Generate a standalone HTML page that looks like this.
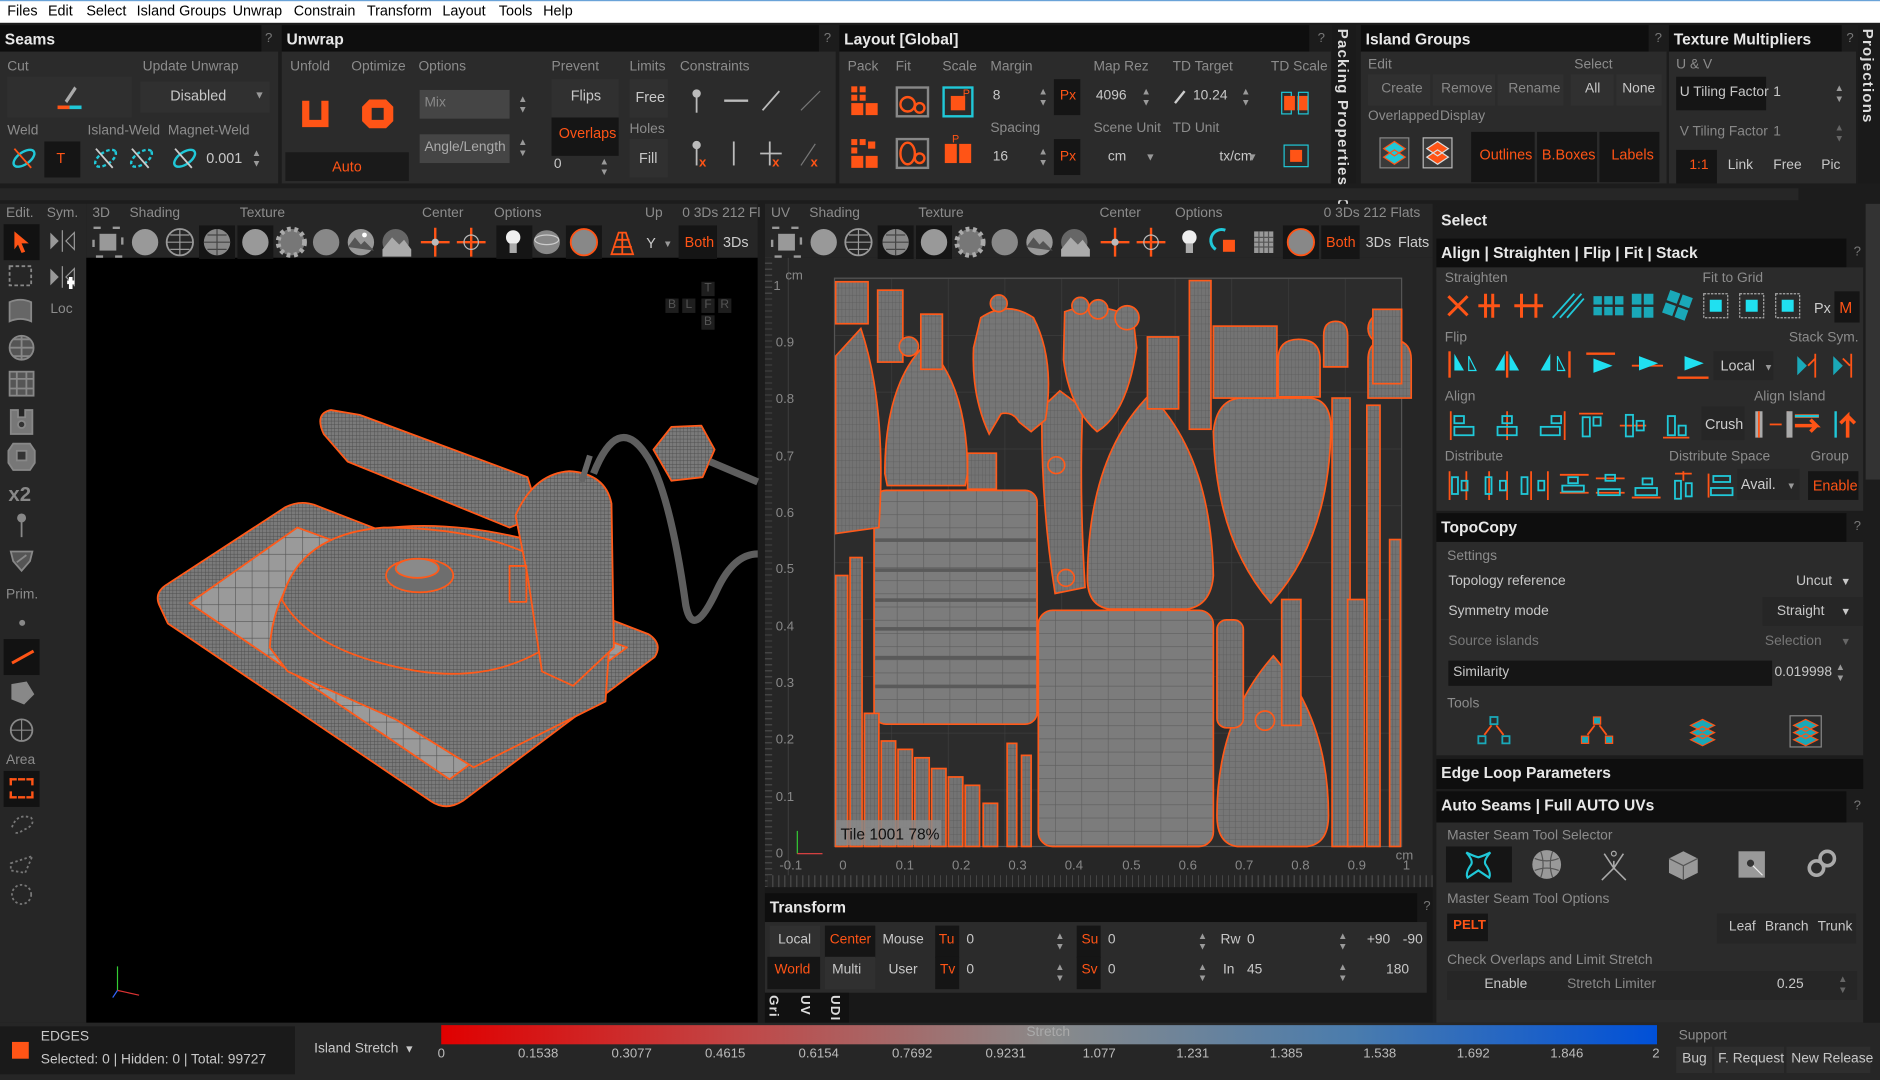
<!DOCTYPE html>
<html><head><meta charset="utf-8">
<style>
*{margin:0;padding:0;box-sizing:border-box}
html,body{width:1880px;height:1080px;overflow:hidden;background:#1c1c1c}
#r{position:absolute;left:0;top:0;width:1568px;height:901px;transform:scale(1.19898);transform-origin:0 0;font-family:"Liberation Sans Narrow","Liberation Sans",sans-serif;font-size:11.5px;color:#c8c8c8;background:#1c1c1c;overflow:hidden}
.a{position:absolute}
.l{position:absolute;color:#8c8c8c;font-size:11.5px;white-space:nowrap}
.t{position:absolute;color:#c8c8c8;white-space:nowrap}
.o{color:#ff5416!important}
.hd{position:absolute;background:#0e0e0e;color:#e8e8e8;font-family:"Liberation Sans",sans-serif;font-weight:bold;font-size:13px;padding:4px 4px;white-space:nowrap}
.pn{position:absolute;background:#2b2b2b}
.bx{position:absolute;background:#333}
.bk{position:absolute;background:#151515}
.c{text-align:center}
.q{position:absolute;color:#777;font-size:11px}
.sp{position:absolute;color:#9a9a9a;font-size:8px;line-height:9px}
.ci{position:absolute;border-radius:50%;background:#9a9a9a}
.vt{position:absolute;writing-mode:vertical-rl;color:#ddd;font-weight:bold;font-family:"Liberation Sans",sans-serif;font-size:12.5px;letter-spacing:1px}
svg{position:absolute;overflow:visible}
</style></head><body><div id="r">

<!-- menu -->
<div class="a" style="left:0;top:0;width:1568px;height:19px;background:#fff;border-top:1px solid #6aa3d8"></div>
<div class="a" style="left:0;top:2px;width:600px;height:16px;white-space:nowrap;font-family:'Liberation Sans Narrow','Liberation Sans',sans-serif;font-size:12px;color:#000">
<span class="a" style="left:6px">Files</span><span class="a" style="left:40px">Edit</span><span class="a" style="left:72px">Select</span><span class="a" style="left:114px">Island Groups</span><span class="a" style="left:194px">Unwrap</span><span class="a" style="left:245px">Constrain</span><span class="a" style="left:306px">Transform</span><span class="a" style="left:369px">Layout</span><span class="a" style="left:416px">Tools</span><span class="a" style="left:453px">Help</span></div>

<!-- ===== SEAMS ===== -->
<div class="pn" style="left:0;top:43px;width:232px;height:110px"></div>
<div class="hd" style="left:0;top:21px;width:218px;height:22px">Seams</div><div class="q" style="left:221px;top:26px">?</div>
<div class="l" style="left:6px;top:50px">Cut</div><div class="l" style="left:119px;top:50px">Update Unwrap</div>
<div class="bx" style="left:6px;top:64px;width:104px;height:34px;background:#2f2f2f"></div>
<svg style="left:48px;top:70px" width="24" height="24"><path d="M14 2 L16 4 L8 16 L6 14Z" fill="#aaa"/><rect x="0" y="18" width="10" height="3" fill="#ff5416"/><rect x="10" y="18" width="10" height="3" fill="#20c8d8"/></svg>
<div class="bx" style="left:117px;top:68px;width:108px;height:26px;background:#303030"></div>
<div class="t" style="left:142px;top:73px;font-size:12px">Disabled</div><div class="t" style="left:212px;top:74px;font-size:9px;color:#999">▼</div>
<div class="l" style="left:6px;top:103px">Weld</div><div class="l" style="left:73px;top:103px">Island-Weld</div><div class="l" style="left:140px;top:103px">Magnet-Weld</div>
<svg style="left:8px;top:122px" width="24" height="20"><ellipse cx="12" cy="10" rx="10" ry="5" fill="none" stroke="#20c8d8" stroke-width="2" transform="rotate(-35 12 10)"/><line x1="4" y1="2" x2="18" y2="18" stroke="#ff5416" stroke-width="1.5"/></svg>
<div class="bk" style="left:37px;top:118px;width:30px;height:30px"></div><div class="t o" style="left:47px;top:125px;font-size:12px">T</div>
<svg style="left:76px;top:122px" width="24" height="20"><ellipse cx="12" cy="10" rx="10" ry="5" fill="none" stroke="#20c8d8" stroke-width="2" stroke-dasharray="3 2" transform="rotate(-35 12 10)"/><line x1="4" y1="2" x2="18" y2="18" stroke="#ccc" stroke-width="1.5"/></svg>
<svg style="left:106px;top:122px" width="24" height="20"><ellipse cx="12" cy="10" rx="10" ry="5" fill="none" stroke="#20c8d8" stroke-width="2" stroke-dasharray="3 2" transform="rotate(-35 12 10)"/><line x1="4" y1="2" x2="18" y2="18" stroke="#ccc" stroke-width="1.5"/></svg>
<svg style="left:142px;top:122px" width="24" height="20"><ellipse cx="12" cy="10" rx="10" ry="5" fill="none" stroke="#20c8d8" stroke-width="2" transform="rotate(-35 12 10)"/><line x1="4" y1="2" x2="18" y2="18" stroke="#ccc" stroke-width="1.5"/></svg>
<div class="t" style="left:172px;top:125px;font-size:12px">0.001</div><div class="sp" style="left:210px;top:123px">▲<br>▼</div>

<!-- ===== UNWRAP ===== -->
<div class="pn" style="left:235px;top:43px;width:462px;height:110px"></div>
<div class="hd" style="left:235px;top:21px;width:448px;height:22px">Unwrap</div><div class="q" style="left:687px;top:26px">?</div>
<div class="l" style="left:242px;top:50px">Unfold</div><div class="l" style="left:293px;top:50px">Optimize</div><div class="l" style="left:349px;top:50px">Options</div><div class="l" style="left:460px;top:50px">Prevent</div><div class="l" style="left:525px;top:50px">Limits</div><div class="l" style="left:567px;top:50px">Constraints</div>
<svg style="left:250px;top:82px" width="28" height="26"><path d="M2 2 H8 V18 H18 V2 H24 V24 H2Z" fill="#ff5416"/></svg>
<svg style="left:302px;top:82px" width="28" height="26"><path d="M6 1 H20 L26 7 V19 L20 25 H6 L0 19 V7Z M8 8 V18 H18 V8Z" fill="#ff5416" fill-rule="evenodd"/></svg>
<div class="bk" style="left:238px;top:127px;width:103px;height:24px;background:#1a1a1a"></div><div class="t o" style="left:277px;top:132px;font-size:12px">Auto</div>
<div class="bx" style="left:350px;top:75px;width:75px;height:24px;background:#454545"></div><div class="t" style="left:354px;top:80px;color:#888">Mix</div><div class="sp" style="left:432px;top:78px">▲<br>▼</div>
<div class="bx" style="left:350px;top:112px;width:75px;height:24px;background:#454545"></div><div class="t" style="left:354px;top:117px;color:#aaa">Angle/Length</div><div class="sp" style="left:432px;top:114px">▲<br>▼</div>
<div class="bx" style="left:460px;top:66px;width:56px;height:32px;background:#303030"></div><div class="t" style="left:476px;top:73px;font-size:12px">Flips</div>
<div class="bk" style="left:460px;top:98px;width:56px;height:32px"></div><div class="t o" style="left:466px;top:104px;font-size:12px">Overlaps</div>
<div class="t" style="left:462px;top:131px">0</div><div class="sp" style="left:500px;top:130px">▲<br>▼</div>
<div class="bx" style="left:525px;top:66px;width:32px;height:32px;background:#303030"></div><div class="t" style="left:530px;top:74px;font-size:12px">Free</div>
<div class="l" style="left:525px;top:102px">Holes</div>
<div class="bx" style="left:525px;top:116px;width:32px;height:32px;background:#303030"></div><div class="t" style="left:533px;top:125px;font-size:12px">Fill</div>
<svg style="left:572px;top:72px" width="120" height="70" stroke="#bbb" fill="#bbb">
<circle cx="9" cy="6" r="3"/><line x1="9" y1="8" x2="9" y2="22" stroke-width="1.5"/>
<line x1="32" y1="12" x2="52" y2="12" stroke-width="2"/>
<line x1="64" y1="20" x2="78" y2="4" stroke-width="1.5"/>
<line x1="96" y1="20" x2="112" y2="4" stroke-width="1" stroke="#777"/>
<circle cx="9" cy="49" r="3"/><line x1="9" y1="51" x2="9" y2="66" stroke-width="1.5"/><text x="11" y="67" fill="#ff5416" stroke="none" font-size="11" font-weight="bold" font-family="Liberation Sans">x</text>
<line x1="40" y1="46" x2="40" y2="66" stroke-width="1.5"/>
<line x1="62" y1="56" x2="80" y2="56" stroke-width="1.5"/><line x1="70" y1="46" x2="70" y2="66" stroke-width="1.5"/><text x="72" y="67" fill="#ff5416" stroke="none" font-size="11" font-weight="bold" font-family="Liberation Sans">x</text>
<line x1="96" y1="66" x2="108" y2="48" stroke-width="1" stroke="#777"/><text x="104" y="67" fill="#ff5416" stroke="none" font-size="11" font-weight="bold" font-family="Liberation Sans">x</text>
</svg>

<!-- ===== LAYOUT ===== -->
<div class="pn" style="left:700px;top:43px;width:410px;height:110px"></div>
<div class="hd" style="left:700px;top:21px;width:392px;height:22px">Layout [Global]</div><div class="q" style="left:1099px;top:26px">?</div>
<div class="l" style="left:707px;top:50px">Pack</div><div class="l" style="left:747px;top:50px">Fit</div><div class="l" style="left:786px;top:50px">Scale</div><div class="l" style="left:826px;top:50px">Margin</div><div class="l" style="left:912px;top:50px">Map Rez</div><div class="l" style="left:978px;top:50px">TD Target</div><div class="l" style="left:1060px;top:50px">TD Scale</div>
<svg style="left:708px;top:72px" width="26" height="72" fill="#ff5416"><rect x="2" y="0" width="5" height="5"/><rect x="9" y="0" width="5" height="5"/><rect x="2" y="7" width="5" height="5"/><rect x="9" y="7" width="5" height="5"/><rect x="2" y="14" width="10" height="10"/><rect x="14" y="14" width="10" height="10"/><rect x="2" y="44" width="5" height="5"/><rect x="9" y="44" width="5" height="5"/><rect x="2" y="51" width="5" height="5"/><rect x="16" y="46" width="6" height="6"/><rect x="2" y="58" width="10" height="10"/><rect x="14" y="58" width="10" height="10"/></svg>
<svg style="left:747px;top:72px" width="28" height="72" fill="none" stroke="#ff5416" stroke-width="2"><rect x="1" y="1" width="26" height="24" stroke="#888"/><circle cx="10" cy="15" r="6"/><circle cx="20" cy="18" r="4"/><rect x="1" y="44" width="26" height="24" stroke="#888"/><ellipse cx="10" cy="56" rx="6" ry="9"/><circle cx="20" cy="60" r="4"/></svg>
<svg style="left:786px;top:72px" width="28" height="72"><rect x="1" y="1" width="24" height="24" fill="none" stroke="#20c8d8" stroke-width="2"/><rect x="7" y="8" width="12" height="12" fill="#ff5416"/><text x="17" y="9" fill="#ff5416" font-size="9" font-family="Liberation Sans">P</text><rect x="2" y="48" width="10" height="16" fill="#ff5416"/><rect x="14" y="48" width="10" height="16" fill="#ff5416"/><text x="8" y="47" fill="#ff5416" font-size="9" font-family="Liberation Sans">P</text></svg>
<div class="t" style="left:828px;top:74px">8</div><div class="sp" style="left:866px;top:72px">▲<br>▼</div><div class="bk" style="left:879px;top:66px;width:22px;height:30px"></div><div class="t o" style="left:884px;top:74px">Px</div>
<div class="l" style="left:826px;top:101px">Spacing</div>
<div class="t" style="left:828px;top:125px">16</div><div class="sp" style="left:866px;top:122px">▲<br>▼</div><div class="bk" style="left:879px;top:116px;width:22px;height:30px"></div><div class="t o" style="left:884px;top:125px">Px</div>
<div class="t" style="left:914px;top:74px">4096</div><div class="sp" style="left:952px;top:72px">▲<br>▼</div>
<div class="l" style="left:912px;top:101px">Scene Unit</div>
<div class="t" style="left:924px;top:125px">cm</div><div class="t" style="left:955px;top:126px;font-size:9px;color:#999">▼</div>
<svg style="left:978px;top:74px" width="12" height="14"><line x1="2" y1="12" x2="10" y2="2" stroke="#ccc" stroke-width="2"/></svg><div class="t" style="left:995px;top:74px">10.24</div><div class="sp" style="left:1035px;top:72px">▲<br>▼</div>
<div class="l" style="left:978px;top:101px">TD Unit</div>
<div class="t" style="left:1017px;top:125px">tx/cm</div><div class="t" style="left:1040px;top:126px;font-size:9px;color:#999">▼</div>
<svg style="left:1068px;top:77px" width="26" height="70"><rect x="1" y="0" width="8" height="18" fill="none" stroke="#20c8d8"/><rect x="3" y="3" width="9" height="12" fill="#ff5416"/><rect x="14" y="3" width="9" height="12" fill="#ff5416"/><rect x="15" y="0" width="8" height="18" fill="none" stroke="#20c8d8"/><rect x="3" y="44" width="20" height="18" fill="none" stroke="#20c8d8"/><rect x="8" y="48" width="10" height="10" fill="#ff5416"/></svg>

<!-- Packing properties vertical -->
<div class="a" style="left:1111px;top:21px;width:20px;height:132px;background:#1a1a1a"></div>
<div class="vt" style="left:1113px;top:24px">Packing Properties [C</div>

<!-- ===== ISLAND GROUPS ===== -->
<div class="pn" style="left:1135px;top:43px;width:255px;height:110px"></div>
<div class="hd" style="left:1135px;top:21px;width:240px;height:22px">Island Groups</div><div class="q" style="left:1380px;top:26px">?</div>
<div class="l" style="left:1141px;top:48px">Edit</div><div class="l" style="left:1313px;top:48px">Select</div>
<div class="bx" style="left:1141px;top:62px;width:52px;height:26px;background:#303030"></div><div class="t" style="left:1152px;top:68px;color:#888">Create</div>
<div class="bx" style="left:1195px;top:62px;width:52px;height:26px;background:#303030"></div><div class="t" style="left:1202px;top:68px;color:#888">Remove</div>
<div class="bx" style="left:1249px;top:62px;width:55px;height:26px;background:#303030"></div><div class="t" style="left:1258px;top:68px;color:#888">Rename</div>
<div class="bx" style="left:1310px;top:62px;width:36px;height:26px;background:#303030"></div><div class="t" style="left:1322px;top:68px">All</div>
<div class="bx" style="left:1348px;top:62px;width:38px;height:26px;background:#303030"></div><div class="t" style="left:1353px;top:68px">None</div>
<div class="l" style="left:1141px;top:91px">Overlapped</div><div class="l" style="left:1201px;top:91px">Display</div>
<svg style="left:1150px;top:114px" width="70" height="28"><rect x="1" y="1" width="24" height="25" fill="#3a3a3a" stroke="#888"/><path d="M13 4 L22 10 L13 16 L4 10Z M13 11 L22 17 L13 23 L4 17Z" fill="#20c8d8" stroke="#ff5416"/><rect x="37" y="1" width="24" height="25" fill="#3a3a3a" stroke="#bbb"/><path d="M49 4 L58 10 L49 16 L40 10Z M49 11 L58 17 L49 23 L40 17Z" fill="#ff5416" stroke="#ddd"/></svg>
<div class="bk" style="left:1227px;top:110px;width:53px;height:42px"></div><div class="t o" style="left:1234px;top:122px;font-size:12px">Outlines</div>
<div class="bk" style="left:1282px;top:110px;width:50px;height:42px"></div><div class="t o" style="left:1286px;top:122px;font-size:12px">B.Boxes</div>
<div class="bk" style="left:1334px;top:110px;width:50px;height:42px"></div><div class="t o" style="left:1344px;top:122px;font-size:12px">Labels</div>

<!-- ===== TEXTURE MULTIPLIERS ===== -->
<div class="pn" style="left:1392px;top:43px;width:156px;height:110px"></div>
<div class="hd" style="left:1392px;top:21px;width:144px;height:22px">Texture Multipliers</div><div class="q" style="left:1540px;top:26px">?</div>
<div class="l" style="left:1398px;top:48px">U &amp; V</div>
<div class="bk" style="left:1398px;top:64px;width:75px;height:28px"></div><div class="t" style="left:1401px;top:71px">U Tiling Factor</div><div class="t" style="left:1479px;top:71px">1</div><div class="sp" style="left:1530px;top:69px">▲<br>▼</div>
<div class="t" style="left:1401px;top:104px;color:#888">V Tiling Factor</div><div class="t" style="left:1479px;top:104px;color:#888">1</div><div class="sp" style="left:1530px;top:102px;color:#666">▲<br>▼</div>
<div class="bk" style="left:1398px;top:125px;width:34px;height:28px"></div><div class="t o" style="left:1409px;top:132px">1:1</div>
<div class="t" style="left:1441px;top:132px">Link</div><div class="t" style="left:1479px;top:132px">Free</div><div class="t" style="left:1519px;top:132px">Pic</div>
<div class="a" style="left:1550px;top:21px;width:18px;height:132px;background:#1a1a1a"></div>
<div class="vt" style="left:1551px;top:24px">Projections</div>

<!-- gap strip -->
<div class="a" style="left:0;top:157px;width:1500px;height:10px;background:#262626"></div>

<!-- ===== 3D VIEWPORT ===== -->
<div class="a" style="left:0;top:170px;width:72px;height:683px;background:#262626"></div>
<div class="a" style="left:72px;top:170px;width:560px;height:45px;background:#262626"></div>
<div class="a" style="left:72px;top:215px;width:560px;height:638px;background:#000"></div>
<div class="a" style="left:632px;top:170px;width:6px;height:683px;background:#1c1c1c"></div>
<div class="l" style="left:5px;top:172px">Edit.</div><div class="l" style="left:39px;top:172px">Sym.</div>
<div class="bk" style="left:3px;top:187px;width:30px;height:30px;background:#121212"></div>
<svg style="left:10px;top:192px" width="16" height="20"><path d="M2 1 L14 11 L8 11 L11 18 L8 19 L5 12 L2 16Z" fill="#ff5416"/></svg>
<svg style="left:40px;top:192px" width="24" height="18"><path d="M2 2 L9 9 L2 16Z" fill="#999"/><line x1="12" y1="0" x2="12" y2="18" stroke="#999"/><path d="M22 2 L15 9 L22 16Z" fill="none" stroke="#999"/></svg>
<svg style="left:40px;top:222px" width="24" height="22"><path d="M2 2 L9 9 L2 16Z" fill="#999"/><line x1="12" y1="0" x2="12" y2="18" stroke="#999"/><path d="M22 2 L15 9 L22 16Z" fill="none" stroke="#999"/><path d="M16 12 h6 v3 h-6Z M17.5 9 h3 v10 h-3Z" fill="#fff"/></svg>
<div class="l" style="left:42px;top:252px">Loc</div>
<svg style="left:6px;top:220px" width="26" height="540" fill="none" stroke="#888" stroke-width="1.5">
<rect x="2" y="2" width="18" height="16" stroke-dasharray="3 2"/>
<path d="M2 32 q9 -4 18 0 v16 q-9 -4 -18 0Z" fill="#666"/>
<circle cx="12" cy="70" r="10" fill="#555"/><path d="M2 70 h20 M12 60 v20 M5 63 h14 M5 77 h14"/>
<rect x="2" y="90" width="20" height="20" fill="#555"/><path d="M2 96 h20 M2 104 h20 M8 90 v20 M16 90 v20"/>
<path d="M3 122 h6 v6 h6 v-6 h6 v20 h-18Z" fill="#777"/><circle cx="12" cy="134" r="3" fill="#333"/>
<path d="M5 150 h14 l4 6 v10 l-4 6 h-14 l-4 -6 v-10Z" fill="#777"/><rect x="8" y="156" width="8" height="8" fill="#333"/>
<text x="1" y="198" fill="#888" stroke="none" font-size="17" font-weight="bold" font-family="Liberation Sans">x2</text>
<circle cx="12" cy="212" r="3" fill="#888"/><line x1="12" y1="214" x2="12" y2="228"/>
<path d="M3 240 h18 l-2 8 l-7 8 l-7 -8Z" fill="#555"/><path d="M8 249 l8 -6"/>
</svg>
<div class="l" style="left:5px;top:490px">Prim.</div>
<div class="ci" style="left:16px;top:517px;width:5px;height:5px;background:#888"></div>
<div class="bk" style="left:3px;top:533px;width:30px;height:30px;background:#121212"></div>
<svg style="left:8px;top:540px" width="22" height="16"><line x1="2" y1="13" x2="20" y2="3" stroke="#ff5416" stroke-width="2.5"/></svg>
<svg style="left:6px;top:565px" width="26" height="60" fill="#888" stroke="#888"><path d="M4 6 l12 -2 l6 10 l-8 8 l-10 -4Z"/><circle cx="12" cy="44" r="9" fill="none" stroke-width="1.5"/><path d="M3 44 h18 M12 35 v18" fill="none"/></svg>
<div class="l" style="left:5px;top:628px">Area</div>
<div class="bk" style="left:3px;top:643px;width:30px;height:30px;background:#121212"></div>
<div class="a" style="left:8px;top:649px;width:20px;height:17px;border:2px dashed #ff5416"></div>
<svg style="left:6px;top:676px" width="26" height="80" fill="none" stroke="#777" stroke-width="1.5" stroke-dasharray="2 2"><path d="M4 14 q4 -12 16 -8 q4 6 -6 10 q-6 4 -8 2"/><path d="M3 44 l18 -6 l-6 14 l-12 -2Z"/><circle cx="12" cy="70" r="8"/></svg>
<!-- 3D toolbar -->
<div class="l" style="left:77px;top:172px">3D</div><div class="l" style="left:108px;top:172px">Shading</div><div class="l" style="left:200px;top:172px">Texture</div><div class="l" style="left:352px;top:172px">Center</div><div class="l" style="left:412px;top:172px">Options</div><div class="l" style="left:538px;top:172px">Up</div><div class="l" style="left:569px;top:172px">0 3Ds 212 Fl</div>
<svg style="left:76px;top:188px" width="560" height="28">
<rect x="2" y="2" width="24" height="24" fill="none" stroke="#999" stroke-dasharray="6 10" stroke-width="2"/><rect x="7" y="7" width="14" height="14" fill="#999"/>
<circle cx="45" cy="14" r="11" fill="#999"/>
<circle cx="74" cy="14" r="11" fill="none" stroke="#999" stroke-width="1.5"/><path d="M63 14 h22 M74 3 v22 M66 8 h16 M66 20 h16" stroke="#999" fill="none"/>
<rect x="90" y="0" width="30" height="28" fill="#151515"/><circle cx="105" cy="14" r="11" fill="#888"/><path d="M94 14 h22 M105 3 v22 M97 8 h16 M97 20 h16" stroke="#444" fill="none"/>
<rect x="122" y="0" width="30" height="28" fill="#151515"/><circle cx="137" cy="14" r="11" fill="#999"/>
<circle cx="167" cy="14" r="11" fill="#777"/><circle cx="167" cy="14" r="11" fill="none" stroke="#aaa" stroke-width="4" stroke-dasharray="3 3"/>
<circle cx="196" cy="14" r="11" fill="#888"/>
<circle cx="225" cy="14" r="11" fill="#999"/><path d="M214 18 l6 -8 l5 6 l3 -3 l8 8" fill="#555"/><circle cx="228" cy="8" r="2" fill="#fff"/>
<circle cx="254" cy="14" r="11" fill="#666"/><path d="M243 20 l8 -10 l6 6 l4 -4 l6 8 v6 h-24Z" fill="#aaa"/>
<path d="M275 14 h24 M287 2 v24" stroke="#ff5416" stroke-width="2"/><circle cx="287" cy="14" r="3" fill="#bbb"/>
<path d="M305 14 h24 M317 2 v24" stroke="#ff5416" stroke-width="2"/><circle cx="317" cy="14" r="6" fill="none" stroke="#bbb"/>
<rect x="338" y="0" width="30" height="28" fill="#151515"/><circle cx="352" cy="10" r="6" fill="#eee"/><rect x="349" y="15" width="6" height="8" fill="#aaa"/>
<ellipse cx="380" cy="14" rx="11" ry="10" fill="#888"/><ellipse cx="380" cy="12" rx="10" ry="4" fill="none" stroke="#ccc"/>
<rect x="396" y="0" width="30" height="28" fill="#151515"/><circle cx="411" cy="14" r="11" fill="#888" stroke="#ff5416" stroke-width="1.5"/>
<path d="M434 24 l6 -18 h6 l6 18Z M436 18 h15 M438 12 h11 M443 6 v18" stroke="#ff5416" fill="none" stroke-width="1.5"/>
<text x="463" y="19" fill="#ccc" font-size="12" font-family="Liberation Sans">Y</text><text x="477" y="18" fill="#999" font-size="8" font-family="Liberation Sans">▼</text>
<rect x="490" y="0" width="32" height="28" fill="#151515"/><text x="495" y="18" fill="#ff5416" font-size="12" font-family="Liberation Sans Narrow,Liberation Sans">Both</text>
<text x="527" y="18" fill="#ccc" font-size="12" font-family="Liberation Sans Narrow,Liberation Sans">3Ds</text>
</svg>
<!-- nav cube -->
<div class="a" style="left:585px;top:235px;font-size:10px;color:#555">
<div class="a" style="left:0px;top:0;width:11px;height:12px;background:#1e1e1e;text-align:center">T</div>
<div class="a" style="left:-30px;top:14px;width:11px;height:12px;background:#1e1e1e;text-align:center">B</div>
<div class="a" style="left:-16px;top:14px;width:11px;height:12px;background:#1e1e1e;text-align:center">L</div>
<div class="a" style="left:0px;top:14px;width:11px;height:12px;background:#1e1e1e;text-align:center">F</div>
<div class="a" style="left:14px;top:14px;width:11px;height:12px;background:#1e1e1e;text-align:center">R</div>
<div class="a" style="left:0px;top:28px;width:11px;height:12px;background:#1e1e1e;text-align:center">B</div></div>
<svg style="left:92px;top:800px" width="30" height="36"><line x1="6" y1="26" x2="6" y2="6" stroke="#3c3"/><line x1="6" y1="26" x2="24" y2="30" stroke="#d33"/><line x1="6" y1="26" x2="2" y2="32" stroke="#36f"/></svg>

<!-- IRON -->
<svg style="left:0;top:0" width="640" height="853">
<defs>
<pattern id="mesh" width="3" height="3" patternUnits="userSpaceOnUse"><rect width="3" height="3" fill="#7a7a7a"/><path d="M0 0 H3 M0 0 V3" stroke="#4c4c4c" stroke-width="0.7"/></pattern>
<pattern id="mesh2" width="14" height="14" patternUnits="userSpaceOnUse"><rect width="14" height="14" fill="#9a9a9a"/><path d="M0 0 H14 M0 0 V14" stroke="#555" stroke-width="1"/></pattern>
</defs>
<g stroke="#ff5a1a" stroke-width="1.5" stroke-linejoin="round">
<path d="M133 505 Q128 494 140 487 L238 423 Q250 417 262 421 L541 529 Q553 537 546 548 L386 668 Q372 677 359 668 L140 520 Z" fill="url(#mesh)"/>
<path d="M158 503 L248 440 L523 540 L375 650 Z" fill="url(#mesh2)"/>
<path d="M225 540 Q230 470 295 445 Q360 430 440 450 L470 470 L508 540 L505 585 L395 640 L330 600 L240 560 Z" fill="url(#mesh)"/>
<path d="M235 500 Q250 445 320 440 Q420 440 470 480 L470 530 Q420 570 350 560 Q260 545 235 500 Z" fill="url(#mesh)"/>
<ellipse cx="350" cy="480" rx="28" ry="14" fill="#6e6e6e"/><ellipse cx="348" cy="474" rx="18" ry="8" fill="#8a8a8a"/>
<path d="M270 362 Q262 345 276 342 L300 346 L440 398 L450 430 L425 440 L290 385 Z" fill="url(#mesh)"/>
<path d="M430 430 Q445 395 475 393 Q505 395 510 420 L512 540 L478 572 L452 560 L440 480 Z" fill="url(#mesh)"/>
<rect x="425" y="472" width="14" height="30" fill="none"/>
<path d="M545 375 L560 356 L585 355 L596 375 L586 398 L560 401 Z" fill="url(#mesh)"/>
</g>
<path d="M495 395 Q515 345 538 378 Q558 405 572 505 Q578 535 598 492 Q612 462 632 462" stroke="#5e5e5e" stroke-width="6" fill="none"/>
<path d="M592 385 L632 402" stroke="#5e5e5e" stroke-width="6"/>
<path d="M485 402 L492 380" stroke="#666" stroke-width="5"/>
</svg>

<!-- ===== UV VIEWPORT ===== -->
<div class="a" style="left:638px;top:170px;width:557px;height:45px;background:#262626"></div>
<div class="a" style="left:638px;top:215px;width:557px;height:525px;background:#262626"></div>
<div class="l" style="left:643px;top:172px">UV</div><div class="l" style="left:675px;top:172px">Shading</div><div class="l" style="left:766px;top:172px">Texture</div><div class="l" style="left:917px;top:172px">Center</div><div class="l" style="left:980px;top:172px">Options</div><div class="l" style="left:1104px;top:172px">0 3Ds 212 Flats</div>
<svg style="left:642px;top:188px" width="560" height="28">
<rect x="2" y="2" width="24" height="24" fill="none" stroke="#999" stroke-dasharray="6 10" stroke-width="2"/><rect x="7" y="7" width="14" height="14" fill="#999"/>
<circle cx="45" cy="14" r="11" fill="#999"/>
<circle cx="74" cy="14" r="11" fill="none" stroke="#999" stroke-width="1.5"/><path d="M63 14 h22 M74 3 v22 M66 8 h16 M66 20 h16" stroke="#999" fill="none"/>
<rect x="90" y="0" width="30" height="28" fill="#151515"/><circle cx="105" cy="14" r="11" fill="#888"/><path d="M94 14 h22 M105 3 v22 M97 8 h16 M97 20 h16" stroke="#444" fill="none"/>
<rect x="122" y="0" width="30" height="28" fill="#151515"/><circle cx="137" cy="14" r="11" fill="#999"/>
<circle cx="167" cy="14" r="11" fill="#777"/><circle cx="167" cy="14" r="11" fill="none" stroke="#aaa" stroke-width="4" stroke-dasharray="3 3"/>
<circle cx="196" cy="14" r="11" fill="#888"/>
<circle cx="225" cy="14" r="11" fill="#999"/><path d="M214 18 l6 -8 l5 6 l3 -3 l8 8" fill="#555"/>
<circle cx="254" cy="14" r="11" fill="#666"/><path d="M243 20 l8 -10 l6 6 l4 -4 l6 8 v6 h-24Z" fill="#aaa"/>
<path d="M276 14 h24 M288 2 v24" stroke="#ff5416" stroke-width="2"/><circle cx="288" cy="14" r="3" fill="#bbb"/>
<path d="M306 14 h24 M318 2 v24" stroke="#ff5416" stroke-width="2"/><circle cx="318" cy="14" r="6" fill="none" stroke="#bbb"/>
<circle cx="350" cy="10" r="6" fill="#eee"/><rect x="347" y="15" width="6" height="8" fill="#aaa"/>
<path d="M372 20 a9 9 0 0 1 8 -16" stroke="#20c8d8" stroke-width="2.5" fill="none"/><rect x="378" y="12" width="10" height="10" fill="#ff5416"/>
<rect x="404" y="5" width="16" height="18" fill="#999"/><path d="M404 10 h16 M404 14 h16 M404 18 h16 M408 5 v18 M412 5 v18 M416 5 v18" stroke="#555"/>
<rect x="428" y="0" width="30" height="28" fill="#151515"/><circle cx="443" cy="14" r="11" fill="#888" stroke="#ff5416" stroke-width="1.5"/>
<rect x="460" y="0" width="32" height="28" fill="#151515"/><text x="464" y="18" fill="#ff5416" font-size="12" font-family="Liberation Sans Narrow,Liberation Sans">Both</text>
<text x="497" y="18" fill="#ccc" font-size="12" font-family="Liberation Sans Narrow,Liberation Sans">3Ds</text>
<text x="524" y="18" fill="#ccc" font-size="12" font-family="Liberation Sans Narrow,Liberation Sans">Flats</text>
</svg>
<div class="a" style="left:638px;top:215px;width:20px;height:525px;border-right:1px solid #3a3a3a;background:repeating-linear-gradient(to bottom,#262626 0 4px,#444 4px 5px);background-size:6px 100%;background-repeat:no-repeat"></div>
<div class="a" style="left:640px;top:730px;width:555px;height:10px;background:repeating-linear-gradient(to right,#262626 0 4px,#444 4px 5px)"></div>
<div class="a" style="left:645px;top:216px;font-size:11px;color:#888;line-height:47.3px">
<div class="a" style="top:0">1</div><div class="a" style="left:10px;top:7px;line-height:14px">cm</div>
</div>
<div class="a" style="left:647px;top:263px;font-size:11px;color:#888;line-height:47.35px">0.9<br>0.8<br>0.7<br>0.6<br>0.5<br>0.4<br>0.3<br>0.2<br>0.1<br>0</div>
<div class="a" style="left:650px;top:716px;width:540px;font-size:11px;color:#888">
<span class="a" style="left:0">-0.1</span><span class="a" style="left:50px">0</span><span class="a" style="left:97px">0.1</span><span class="a" style="left:144px">0.2</span><span class="a" style="left:191px">0.3</span><span class="a" style="left:238px">0.4</span><span class="a" style="left:286px">0.5</span><span class="a" style="left:333px">0.6</span><span class="a" style="left:380px">0.7</span><span class="a" style="left:427px">0.8</span><span class="a" style="left:474px">0.9</span><span class="a" style="left:520px">1</span><span class="a" style="left:514px;top:-8px">cm</span></div>
<svg style="left:0;top:0" width="1200" height="740">
<defs>
<pattern id="uvg" width="47.3" height="47.4" x="696" y="232" patternUnits="userSpaceOnUse"><rect width="47.3" height="47.4" fill="#2c2c2c"/><path d="M0 0 H47.3 M0 0 V47.4" stroke="#3f3f3f"/></pattern>
<pattern id="um" width="5" height="5" patternUnits="userSpaceOnUse"><rect width="5" height="5" fill="#767676"/><path d="M0 0 H5 M0 0 V5" stroke="#5d5d5d" stroke-width="0.7"/></pattern>
<pattern id="ub" width="22" height="11" patternUnits="userSpaceOnUse"><rect width="22" height="11" fill="#7c7c7c"/><path d="M0 0 H22 M0 0 V11" stroke="#5d5d5d" stroke-width="1"/></pattern>
<pattern id="us" width="3" height="6" patternUnits="userSpaceOnUse"><rect width="3" height="6" fill="#737373"/><path d="M0 0 V6 M0 0 H3" stroke="#5a5a5a" stroke-width="0.6"/></pattern>
</defs>
<rect x="696" y="232" width="473" height="474" fill="url(#uvg)" stroke="#555"/>
<g stroke="#ff5a1a" stroke-width="1.4">
<rect x="729" y="409" width="136" height="195" rx="10" fill="url(#ub)"/>
<g stroke="none" fill="#5a5a5a"><rect x="730" y="449" width="134" height="3"/><rect x="730" y="474" width="134" height="3"/><rect x="730" y="499" width="134" height="3"/><rect x="730" y="523" width="134" height="3"/><rect x="730" y="547" width="134" height="3"/><rect x="730" y="571" width="134" height="3"/></g>
<rect x="866" y="509" width="146" height="197" rx="12" fill="url(#ub)"/>
<path d="M959 329 Q1010 380 1012 480 Q1010 505 990 508 H925 Q906 505 907 480 Q908 380 959 329Z" fill="url(#um)"/>
<path d="M1012 360 Q1015 333 1035 332 H1092 Q1111 333 1110 360 Q1108 450 1060 503 Q1014 450 1012 360Z" fill="url(#um)"/>
<path d="M1062 547 Q1108 600 1108 680 Q1108 704 1090 706 H1032 Q1015 704 1015 680 Q1015 600 1062 547Z" fill="url(#um)"/>
<path d="M772 287 Q807 320 807 395 L805 405 H740 L738 395 Q738 320 772 287Z" fill="url(#um)"/>
<path d="M697 297 L718 274 Q740 340 733 440 L697 445Z" fill="url(#us)"/>
<path d="M884 326 L903 340 Q900 410 905 490 L880 495 Q868 420 869 340Z" fill="url(#us)"/>
<path d="M818 265 Q840 250 862 265 Q880 300 872 350 L860 360 L850 352 Q845 343 835 345 L825 362 Q810 330 812 290Z" fill="url(#um)"/>
<path d="M888 260 Q915 250 945 265 L948 290 Q940 345 915 360 Q892 340 887 300Z" fill="url(#um)"/>
<rect x="1111" y="332" width="15" height="374" fill="url(#us)"/>
<rect x="1140" y="338" width="11" height="368" fill="url(#us)"/>
<rect x="1159" y="450" width="9" height="256" fill="url(#us)"/>
<rect x="1012" y="272" width="53" height="60" fill="url(#us)"/>
<path d="M1066 300 Q1066 283 1083 283 Q1101 283 1101 300 V331 H1066Z" fill="url(#us)"/>
<path d="M1141 300 Q1141 283 1159 283 Q1177 283 1177 300 V332 H1141Z" fill="url(#us)"/>
<path d="M1104 280 Q1104 268 1114 268 Q1124 268 1124 280 V306 H1104Z" fill="url(#us)"/>
<rect x="992" y="234" width="18" height="124" fill="url(#us)"/>
<rect x="957" y="281" width="26" height="60" fill="url(#us)"/>
<rect x="697" y="235" width="27" height="35" fill="url(#us)"/>
<rect x="732" y="242" width="21" height="60" fill="url(#us)"/>
<rect x="768" y="262" width="18" height="46" fill="url(#us)"/>
<circle cx="758" cy="289" r="8" fill="url(#um)"/><circle cx="833" cy="253" r="7" fill="url(#um)"/><circle cx="916" cy="258" r="8" fill="url(#um)"/><circle cx="901" cy="255" r="7" fill="url(#um)"/><circle cx="940" cy="265" r="10" fill="url(#um)"/><circle cx="1154" cy="274" r="13" fill="url(#um)"/><circle cx="881" cy="388" r="7" fill="url(#um)"/><circle cx="889" cy="482" r="7" fill="url(#um)"/><circle cx="1055" cy="601" r="8" fill="url(#um)"/>
<rect x="1015" y="517" width="22" height="90" rx="8" fill="url(#us)"/>
<rect x="1069" y="500" width="16" height="105" fill="url(#us)"/>
<rect x="1124" y="500" width="14" height="206" fill="url(#us)"/>
<rect x="807" y="378" width="24" height="30" fill="url(#us)"/>
<rect x="697" y="480" width="10" height="226" fill="url(#us)"/><rect x="709" y="465" width="10" height="241" fill="url(#us)"/><rect x="721" y="595" width="12" height="111" fill="url(#us)"/><rect x="735" y="618" width="12" height="88" fill="url(#us)"/><rect x="749" y="625" width="12" height="81" fill="url(#us)"/><rect x="763" y="632" width="12" height="74" fill="url(#us)"/><rect x="777" y="641" width="12" height="65" fill="url(#us)"/><rect x="791" y="648" width="12" height="58" fill="url(#us)"/><rect x="805" y="655" width="12" height="51" fill="url(#us)"/><rect x="820" y="670" width="12" height="36" fill="url(#us)"/><rect x="840" y="620" width="8" height="86" fill="url(#us)"/><rect x="852" y="630" width="8" height="76" fill="url(#us)"/>
<rect x="1145" y="258" width="24" height="62" fill="url(#us)"/>
</g>
<rect x="697" y="684" width="88" height="21" fill="#8a8a8a" opacity="0.85"/>
<text x="701" y="700" fill="#111" font-size="13" font-family="Liberation Sans">Tile 1001 78%</text>
<line x1="665" y1="712" x2="665" y2="693" stroke="#3c3"/><line x1="665" y1="712" x2="686" y2="712" stroke="#e44"/>
</svg>

<!-- Transform -->
<div class="a" style="left:638px;top:740px;width:557px;height:113px;background:#181818"></div>
<div class="hd" style="left:638px;top:745px;width:544px;height:24px">Transform</div><div class="q" style="left:1187px;top:750px">?</div>
<div class="pn" style="left:638px;top:769px;width:552px;height:59px"></div>
<div class="bx" style="left:642px;top:772px;width:42px;height:27px;background:#303030"></div><div class="t" style="left:649px;top:778px">Local</div>
<div class="bk" style="left:688px;top:772px;width:42px;height:27px"></div><div class="t o" style="left:692px;top:778px">Center</div>
<div class="t" style="left:736px;top:778px">Mouse</div>
<div class="bk" style="left:640px;top:798px;width:44px;height:27px"></div><div class="t o" style="left:646px;top:803px">World</div>
<div class="bx" style="left:688px;top:798px;width:42px;height:27px;background:#303030"></div><div class="t" style="left:694px;top:803px">Multi</div>
<div class="t" style="left:741px;top:803px">User</div>
<div class="bk" style="left:780px;top:772px;width:20px;height:27px"></div><div class="t o" style="left:783px;top:778px">Tu</div><div class="t" style="left:806px;top:778px">0</div><div class="sp" style="left:880px;top:776px">▲<br>▼</div>
<div class="bk" style="left:780px;top:798px;width:20px;height:27px"></div><div class="t o" style="left:784px;top:803px">Tv</div><div class="t" style="left:806px;top:803px">0</div><div class="sp" style="left:880px;top:802px">▲<br>▼</div>
<div class="bk" style="left:898px;top:772px;width:20px;height:27px"></div><div class="t o" style="left:902px;top:778px">Su</div><div class="t" style="left:924px;top:778px">0</div><div class="sp" style="left:999px;top:776px">▲<br>▼</div>
<div class="bk" style="left:898px;top:798px;width:20px;height:27px"></div><div class="t o" style="left:902px;top:803px">Sv</div><div class="t" style="left:924px;top:803px">0</div><div class="sp" style="left:999px;top:802px">▲<br>▼</div>
<div class="t" style="left:1018px;top:778px">Rw</div><div class="t" style="left:1040px;top:778px">0</div><div class="sp" style="left:1116px;top:776px">▲<br>▼</div>
<div class="t" style="left:1020px;top:803px">In</div><div class="t" style="left:1040px;top:803px">45</div><div class="sp" style="left:1116px;top:802px">▲<br>▼</div>
<div class="t" style="left:1140px;top:778px">+90</div><div class="t" style="left:1170px;top:778px">-90</div><div class="t" style="left:1156px;top:803px">180</div>
<div class="a" style="left:638px;top:828px;width:70px;height:25px;background:#111"></div>
<div class="vt" style="left:639px;top:830px;font-size:11px">Gri</div><div class="vt" style="left:665px;top:830px;font-size:11px">UV</div><div class="vt" style="left:690px;top:830px;font-size:11px">UDI</div>

<!-- ===== RIGHT PANEL ===== -->
<div class="a" style="left:1195px;top:170px;width:373px;height:683px;background:#1c1c1c"></div>
<div class="a" style="left:1556px;top:170px;width:12px;height:230px;background:#333"></div>
<div class="hd" style="left:1198px;top:172px;width:356px;height:24px;background:#1c1c1c">Select</div>
<div class="hd" style="left:1198px;top:199px;width:342px;height:24px">Align | Straighten | Flip | Fit | Stack</div><div class="q" style="left:1546px;top:204px">?</div>
<div class="pn" style="left:1198px;top:223px;width:356px;height:203px"></div>
<div class="l" style="left:1205px;top:226px">Straighten</div><div class="l" style="left:1420px;top:226px">Fit to Grid</div>
<svg style="left:1205px;top:243px" width="350" height="180">
<g stroke="#ff5416" stroke-width="2.5" fill="none"><path d="M3 4 l16 16 M3 20 l16 -16"/><path d="M34 2 v20 M40 2 v20 M28 12 h18" /><path d="M64 2 v20 M76 2 v20 M58 12 h24"/></g>
<path d="M90 22 l18 -20 M96 22 l18 -20 M102 22 l14 -16" stroke="#20c8d8" stroke-width="1.5"/>
<g fill="#1aa8b8"><rect x="124" y="4" width="7" height="7"/><rect x="133" y="4" width="7" height="7"/><rect x="142" y="4" width="7" height="7"/><rect x="124" y="13" width="7" height="7"/><rect x="133" y="13" width="7" height="7"/><rect x="142" y="13" width="7" height="7"/><rect x="156" y="2" width="8" height="9"/><rect x="166" y="2" width="8" height="9"/><rect x="156" y="13" width="8" height="9"/><rect x="166" y="13" width="8" height="9"/></g>
<g fill="#1aa8b8" transform="rotate(20 195 12)"><rect x="184" y="2" width="9" height="9"/><rect x="195" y="2" width="9" height="9"/><rect x="184" y="13" width="9" height="9"/><rect x="195" y="13" width="9" height="9"/></g>
<g fill="none" stroke="#aaa" stroke-dasharray="2 1"><rect x="216" y="2" width="20" height="20"/><rect x="246" y="2" width="20" height="20"/><rect x="276" y="2" width="20" height="20"/></g>
<rect x="221" y="7" width="10" height="10" fill="#20e0f0"/><rect x="251" y="7" width="10" height="10" fill="#20e0f0"/><rect x="281" y="7" width="10" height="10" fill="#20e0f0"/>
<text x="308" y="18" fill="#ccc" font-size="12" font-family="Liberation Sans">Px</text>
<rect x="325" y="0" width="21" height="26" fill="#151515"/><text x="329" y="18" fill="#ff5416" font-size="13" font-family="Liberation Sans">M</text>
<g transform="translate(0,50)">
<path d="M8 2 l8 14 h-8Z" fill="#20e0f0"/><path d="M20 4 l6 12 h-6Z" fill="none" stroke="#20e0f0"/><path d="M4 0 v22" stroke="#ff5416" stroke-width="2"/>
<path d="M50 2 l-8 14 h8Z M54 2 l8 14 h-8Z" fill="#20e0f0"/><path d="M52 0 v22" stroke="#ff5416" stroke-width="2"/>
<path d="M88 2 l-8 14 h8Z" fill="#20e0f0"/><path d="M94 4 l6 12 h-6Z" fill="none" stroke="#20e0f0"/><path d="M104 0 v22" stroke="#ff5416" stroke-width="2"/>
<path d="M118 2 h24" stroke="#ff5416" stroke-width="2"/><path d="M124 6 l16 6 l-16 6Z" fill="#20e0f0"/>
<path d="M156 12 h26" stroke="#ff5416" stroke-width="1.5"/><path d="M162 4 l16 6 l-16 6Z" fill="#20e0f0"/>
<path d="M194 22 h26" stroke="#ff5416" stroke-width="2"/><path d="M200 4 l16 6 l-16 6Z" fill="#20e0f0"/>
<rect x="224" y="0" width="50" height="24" fill="#262626"/><text x="230" y="16" fill="#ccc" font-size="12" font-family="Liberation Sans">Local</text><text x="266" y="16" fill="#999" font-size="8">▼</text>
<path d="M294 4 l8 8 l-8 8Z M324 4 l8 8 l-8 8Z" fill="#1aa8b8"/><path d="M303 12 l6 -6 M309 2 v20" stroke="#ff5416" stroke-width="1.5" fill="none"/><path d="M338 12 l-6 -6 M339 2 v20" stroke="#ff5416" stroke-width="1.5" fill="none"/>
</g>
<g transform="translate(0,100)" fill="none" stroke-width="1.5">
<path d="M5 0 v24" stroke="#ff5416"/><rect x="8" y="4" width="8" height="6" stroke="#20c8d8"/><rect x="8" y="13" width="16" height="7" stroke="#20c8d8"/>
<path d="M52 0 v24" stroke="#ff5416"/><rect x="48" y="4" width="8" height="6" stroke="#20c8d8"/><rect x="44" y="13" width="16" height="7" stroke="#20c8d8"/>
<path d="M100 0 v24" stroke="#ff5416"/><rect x="89" y="4" width="8" height="6" stroke="#20c8d8"/><rect x="80" y="13" width="16" height="7" stroke="#20c8d8"/>
<path d="M112 2 h20" stroke="#ff5416"/><rect x="115" y="5" width="6" height="16" stroke="#20c8d8"/><rect x="124" y="5" width="6" height="7" stroke="#20c8d8"/>
<path d="M146 12 h22" stroke="#ff5416"/><rect x="151" y="3" width="6" height="18" stroke="#20c8d8"/><rect x="160" y="8" width="6" height="8" stroke="#20c8d8"/>
<path d="M182 22 h22" stroke="#ff5416"/><rect x="186" y="4" width="6" height="16" stroke="#20c8d8"/><rect x="195" y="12" width="6" height="8" stroke="#20c8d8"/>
<rect x="214" y="-4" width="36" height="28" fill="#262626" stroke="none"/><text x="217" y="15" fill="#ccc" stroke="none" font-size="12" font-family="Liberation Sans">Crush</text>
<rect x="259" y="0" width="6" height="22" fill="#aaa" stroke="none"/><path d="M262 0 v22 M286 0 v22" stroke="#ff5416"/><rect x="285" y="0" width="5" height="22" fill="#aaa" stroke="none"/><path d="M281 11 h-10" stroke="#ff5416"/>
<path d="M292 4 h20 M292 12 h18 l-5 -5 M310 12 l-5 5" stroke="#ff5416" stroke-width="3"/><path d="M292 4 h20" stroke="#20c8d8" stroke-width="2"/>
<path d="M326 0 v22" stroke="#20c8d8" stroke-width="2"/><path d="M336 22 v-18 l-6 6 M336 4 l6 6" stroke="#ff5416" stroke-width="3"/>
</g>
<g transform="translate(0,150)" fill="none" stroke-width="1.5">
<path d="M4 0 v24 M18 0 v24" stroke="#ff5416"/><rect x="6" y="5" width="5" height="14" stroke="#20c8d8"/><rect x="14" y="8" width="5" height="8" stroke="#20c8d8"/>
<path d="M37 0 v24 M52 0 v24" stroke="#ff5416"/><rect x="34" y="5" width="5" height="14" stroke="#20c8d8"/><rect x="46" y="8" width="5" height="8" stroke="#20c8d8"/>
<path d="M72 0 v24 M86 0 v24" stroke="#ff5416"/><rect x="64" y="5" width="5" height="14" stroke="#20c8d8"/><rect x="78" y="8" width="5" height="8" stroke="#20c8d8"/>
<path d="M96 3 h24 M96 18 h24" stroke="#ff5416"/><rect x="103" y="5" width="8" height="5" stroke="#20c8d8"/><rect x="98" y="12" width="18" height="5" stroke="#20c8d8"/>
<path d="M126 6 h24 M126 18 h24" stroke="#ff5416"/><rect x="134" y="3" width="8" height="5" stroke="#20c8d8"/><rect x="128" y="15" width="18" height="5" stroke="#20c8d8"/>
<path d="M156 22 h24" stroke="#ff5416"/><rect x="165" y="6" width="8" height="5" stroke="#20c8d8"/><rect x="159" y="14" width="18" height="6" stroke="#20c8d8"/>
<path d="M192 2 h14 M199 0 v8" stroke="#ff5416"/><rect x="192" y="8" width="5" height="15" stroke="#20c8d8"/><rect x="201" y="10" width="5" height="11" stroke="#20c8d8"/>
<path d="M220 2 v20" stroke="#ff5416"/><rect x="224" y="4" width="14" height="5" stroke="#20c8d8"/><rect x="222" y="14" width="18" height="6" stroke="#20c8d8"/>
<rect x="244" y="-2" width="52" height="26" fill="#262626" stroke="none"/><text x="247" y="15" fill="#ccc" stroke="none" font-size="12" font-family="Liberation Sans">Avail.</text><text x="285" y="15" fill="#999" stroke="none" font-size="8">▼</text>
<rect x="303" y="0" width="42" height="24" fill="#151515" stroke="none"/><text x="307" y="16" fill="#ff5416" stroke="none" font-size="12" font-family="Liberation Sans">Enable</text>
</g>
</svg>
<div class="l" style="left:1205px;top:276px">Flip</div><div class="l" style="left:1492px;top:276px">Stack Sym.</div>
<div class="l" style="left:1205px;top:325px">Align</div><div class="l" style="left:1463px;top:325px">Align Island</div>
<div class="l" style="left:1205px;top:375px">Distribute</div><div class="l" style="left:1392px;top:375px">Distribute Space</div><div class="l" style="left:1510px;top:375px">Group</div>

<div class="hd" style="left:1198px;top:428px;width:342px;height:24px">TopoCopy</div><div class="q" style="left:1546px;top:433px">?</div>
<div class="pn" style="left:1198px;top:452px;width:356px;height:178px"></div>
<div class="l" style="left:1207px;top:458px">Settings</div>
<div class="t" style="left:1208px;top:479px;font-family:'Liberation Sans';font-size:11.5px">Topology reference</div><div class="t" style="left:1498px;top:479px;font-family:'Liberation Sans'">Uncut</div><div class="t" style="left:1535px;top:480px;font-size:9px">▼</div>
<div class="bx" style="left:1470px;top:498px;width:84px;height:24px;background:#262626"></div>
<div class="t" style="left:1208px;top:504px;font-family:'Liberation Sans'">Symmetry mode</div><div class="t" style="left:1482px;top:504px;font-family:'Liberation Sans'">Straight</div><div class="t" style="left:1535px;top:505px;font-size:9px">▼</div>
<div class="t" style="left:1208px;top:529px;font-family:'Liberation Sans';color:#777">Source islands</div><div class="t" style="left:1472px;top:529px;font-family:'Liberation Sans';color:#777">Selection</div><div class="t" style="left:1535px;top:530px;font-size:9px;color:#666">▼</div>
<div class="bk" style="left:1208px;top:551px;width:270px;height:21px"></div><div class="t" style="left:1212px;top:555px;font-family:'Liberation Sans'">Similarity</div><div class="t" style="left:1480px;top:555px;font-family:'Liberation Sans'">0.019998</div><div class="sp" style="left:1531px;top:552px">▲<br>▼</div>
<div class="l" style="left:1207px;top:581px">Tools</div>
<svg style="left:1230px;top:596px" width="300" height="30">
<g fill="none" stroke="#1aa8b8" stroke-width="1.5"><rect x="13" y="2" width="6" height="6"/><rect x="3" y="18" width="6" height="6"/><rect x="23" y="18" width="6" height="6"/></g><path d="M14 9 l-6 8 M18 9 l6 8" stroke="#ff5416" stroke-width="1.5"/>
<g fill="#1aa8b8" stroke="#ff5416"><rect x="99" y="2" width="6" height="6"/><rect x="89" y="18" width="6" height="6"/><rect x="109" y="18" width="6" height="6"/></g><path d="M100 9 l-6 8 M104 9 l6 8" stroke="#ff5416" stroke-width="1.5"/>
<path d="M190 4 l10 5 l-10 5 l-10 -5Z M190 10 l10 5 l-10 5 l-10 -5Z M190 16 l10 5 l-10 5 l-10 -5Z" fill="#1aa8b8" stroke="#ff5416"/>
<rect x="263" y="1" width="26" height="26" fill="none" stroke="#888"/><path d="M276 4 l10 5 l-10 5 l-10 -5Z M276 10 l10 5 l-10 5 l-10 -5Z M276 16 l10 5 l-10 5 l-10 -5Z" fill="#1aa8b8" stroke="#ff5416"/>
</svg>
<div class="hd" style="left:1198px;top:633px;width:356px;height:25px">Edge Loop Parameters</div>
<div class="hd" style="left:1198px;top:660px;width:342px;height:26px">Auto Seams | Full AUTO UVs</div><div class="q" style="left:1546px;top:666px">?</div>
<div class="pn" style="left:1198px;top:686px;width:356px;height:167px"></div>
<div class="l" style="left:1207px;top:691px">Master Seam Tool Selector</div>
<div class="bk" style="left:1206px;top:706px;width:55px;height:30px"></div>
<svg style="left:1220px;top:708px" width="320" height="30">
<path d="M3 3 Q9 10 7 13 Q2 20 4 24 Q10 20 13 18 Q16 20 22 24 Q24 20 19 13 Q17 10 23 3 Q17 6 13 7 Q9 6 3 3Z" fill="none" stroke="#20c8d8" stroke-width="1.8"/>
<circle cx="70" cy="13" r="12" fill="#999"/><path d="M60 8 q10 4 20 0 M60 18 q10 -4 20 0 M65 2 q4 11 0 22 M75 2 q-4 11 0 22" stroke="#555" fill="none"/>
<path d="M118 4 l8 12 l8 -12 M126 16 l-10 10 M126 16 l10 10 M126 16 v-6" stroke="#aaa" fill="none" stroke-width="1.3"/><circle cx="126" cy="4" r="2" fill="none" stroke="#aaa"/>
<path d="M184 2 l12 6 v12 l-12 6 l-12 -6 v-12Z" fill="#999"/><path d="M172 8 l12 6 l12 -6 M184 14 v12" stroke="#555" fill="none"/>
<rect x="230" y="2" width="22" height="22" fill="#999"/><circle cx="240" cy="12" r="3" fill="#333"/><path d="M242 14 l8 8" stroke="#eee"/>
<circle cx="295" cy="16" r="6" fill="none" stroke="#aaa" stroke-width="3"/><circle cx="304" cy="8" r="6" fill="none" stroke="#aaa" stroke-width="3"/>
</svg>
<div class="l" style="left:1207px;top:744px">Master Seam Tool Options</div>
<div class="bk" style="left:1207px;top:762px;width:34px;height:23px"></div><div class="t o" style="left:1212px;top:766px;font-family:'Liberation Sans';font-weight:bold;font-size:11px">PELT</div>
<div class="bx" style="left:1432px;top:762px;width:116px;height:25px;background:#262626"></div>
<div class="t" style="left:1442px;top:767px;font-family:'Liberation Sans'">Leaf</div><div class="t" style="left:1472px;top:767px;font-family:'Liberation Sans'">Branch</div><div class="t" style="left:1516px;top:767px;font-family:'Liberation Sans'">Trunk</div>
<div class="l" style="left:1207px;top:795px;font-family:'Liberation Sans'">Check Overlaps and Limit Stretch</div>
<div class="bx" style="left:1207px;top:810px;width:342px;height:24px;background:#262626"></div>
<div class="t" style="left:1238px;top:815px;font-family:'Liberation Sans'">Enable</div><div class="t" style="left:1307px;top:815px;font-family:'Liberation Sans';color:#888">Stretch Limiter</div><div class="t" style="left:1482px;top:815px;font-family:'Liberation Sans'">0.25</div><div class="sp" style="left:1533px;top:812px;color:#666">▲<br>▼</div>

<!-- ===== BOTTOM BAR ===== -->
<div class="a" style="left:0;top:853px;width:1568px;height:48px;background:#262626"></div>
<div class="a" style="left:0;top:856px;width:246px;height:40px;background:#1a1a1a"></div>
<div class="a" style="left:10px;top:869px;width:14px;height:14px;background:#ff5416"></div>
<div class="t" style="left:34px;top:859px;font-size:11.5px">EDGES</div>
<div class="t" style="left:34px;top:878px;font-size:11.5px">Selected: 0 | Hidden: 0 | Total: 99727</div>
<div class="t" style="left:262px;top:869px">Island Stretch</div><div class="t" style="left:337px;top:870px;font-size:9px">▼</div>
<div class="a" style="left:368px;top:855px;width:1014px;height:16px;background:linear-gradient(to right,#e00000 0%,#c04848 25%,#8a8a8a 50%,#4a7cad 75%,#0050d8 100%)"></div>
<div class="t" style="left:856px;top:855px;color:#aaa">Stretch</div>
<div class="a" style="left:365px;top:873px;width:1030px;font-size:11px;color:#bbb">
<span class="a" style="left:0">0</span><span class="a" style="left:67px">0.1538</span><span class="a" style="left:145px">0.3077</span><span class="a" style="left:223px">0.4615</span><span class="a" style="left:301px">0.6154</span><span class="a" style="left:379px">0.7692</span><span class="a" style="left:457px">0.9231</span><span class="a" style="left:538px">1.077</span><span class="a" style="left:616px">1.231</span><span class="a" style="left:694px">1.385</span><span class="a" style="left:772px">1.538</span><span class="a" style="left:850px">1.692</span><span class="a" style="left:928px">1.846</span><span class="a" style="left:1013px">2</span></div>
<div class="l" style="left:1400px;top:858px;font-family:'Liberation Sans'">Support</div>
<div class="bx" style="left:1398px;top:873px;width:30px;height:22px;background:#2e2e2e"></div><div class="t" style="left:1403px;top:877px;font-family:'Liberation Sans'">Bug</div>
<div class="bx" style="left:1430px;top:873px;width:58px;height:22px;background:#2e2e2e"></div><div class="t" style="left:1433px;top:877px;font-family:'Liberation Sans'">F. Request</div>
<div class="bx" style="left:1490px;top:873px;width:70px;height:22px;background:#2e2e2e"></div><div class="t" style="left:1494px;top:877px;font-family:'Liberation Sans'">New Release</div>

</div></body></html>
